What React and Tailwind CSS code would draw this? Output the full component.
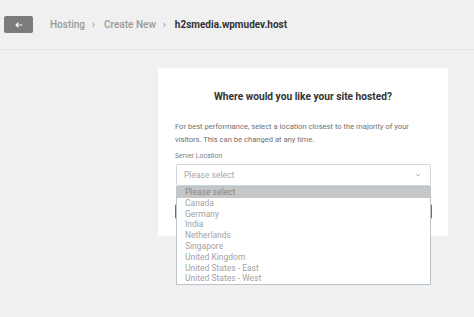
import { ChevronDown } from 'lucide-react';

const locations = [
  'Please select',
  'Canada',
  'Germany',
  'India',
  'Netherlands',
  'Singapore',
  'United Kingdom',
  'United States - East',
  'United States - West',
];

export default function App() {
  return (
    <div className="h-[317px] w-[474px] overflow-hidden bg-[#f0f0f0] font-['Roboto',sans-serif]">
      {/* Header */}
      <div className="flex h-[50px] items-center border-b border-[#e4e4e4] pl-[4px]">
        <button
          type="button"
          className="flex h-[17px] w-[29px] items-center justify-center rounded-[2px] bg-[#7b7b7b] text-white"
        >
          <svg width="8" height="6" viewBox="0 0 9 7" fill="none" stroke="white" strokeWidth="1.3">
            <path d="M8.5 3.5H1.2M3.8 0.8 1.1 3.5 3.8 6.2" />
          </svg>
        </button>
        <div className="ml-[17px] flex items-center text-[10px] font-medium">
          <span className="text-[#9a9a9a]">Hosting</span>
          <span className="ml-[7px] mr-[9px] text-[10px] text-[#9a9a9a]">›</span>
          <span className="text-[#9a9a9a]">Create New</span>
          <span className="ml-[7px] mr-[9px] text-[10px] text-[#9a9a9a]">›</span>
          <span className="font-bold text-[#333]">h2smedia.wpmudev.host</span>
        </div>
      </div>

      {/* Card */}
      <div className="ml-[158px] mt-[18px] flex h-[168px] w-[290px] flex-col bg-white px-[17px] pt-[22px]">
        <h2 className="text-center text-[10.2px] font-bold leading-[13px] text-[#333]">Where would you like your site hosted?</h2>
        <p className="mt-[17px] text-[7.6px] leading-[13px] text-[#707070]">
          For best performance, select a location closest to the majority of your visitors. This can be changed at any time.
        </p>
        <label className="mt-[5px] text-[6.8px] leading-[10px] text-[#808080]">Server Location</label>

        <div className="relative mt-[3px] ml-[1px] w-[255px]">
          <div className="flex h-[22px] items-center justify-between rounded-[2px] border border-[#cfd6dc] pl-[7px] pr-[8px] text-[8.5px] text-[#a8a8a8]">
            <span>Please select</span>
            <ChevronDown size={8} strokeWidth={2} className="text-[#999]" />
          </div>

          {/* Button hidden behind the open list */}
          <div className="-ml-[1px] mt-[18px] h-[15px] w-[257px] rounded-[2px] bg-[#6f6f6f]" />

          <ul className="absolute left-0 top-[22px] w-[255px] border border-[#b9c3cb] bg-white text-[8.5px] leading-[10.8px] text-[#a3a3a3]">
            {locations.map((loc, i) => (
              <li
                key={loc}
                className={`h-[10.8px] pl-[8px] ${i === 0 ? 'bg-[#c6c6c6] text-[#888]' : ''}`}
              >
                {loc}
              </li>
            ))}
          </ul>
        </div>
      </div>
    </div>
  );
}
